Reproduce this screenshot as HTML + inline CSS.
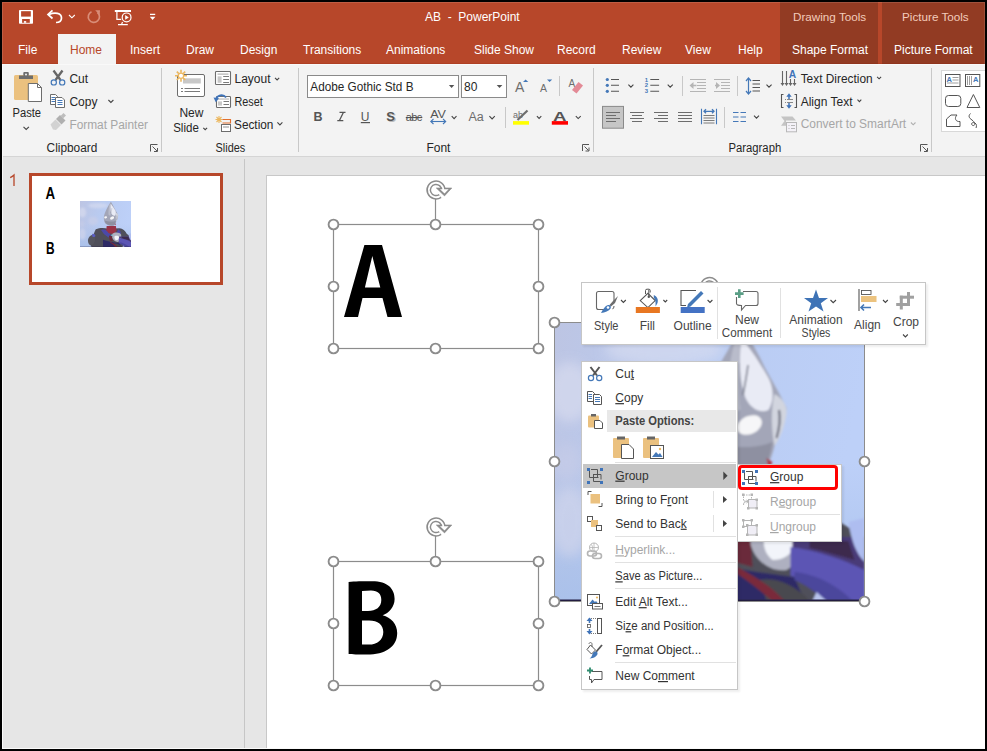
<!DOCTYPE html>
<html><head><meta charset="utf-8">
<style>
*{box-sizing:border-box}
html,body{margin:0;padding:0}
body{width:987px;height:751px;position:relative;overflow:hidden;background:#e6e6e6;font-family:"Liberation Sans",sans-serif;color:#262626}
.a{position:absolute}
.t{position:absolute;white-space:nowrap;line-height:1}
svg{position:absolute;overflow:visible}
</style></head><body>
<!-- title bar -->
<div class="a" style="left:0;top:0;width:987px;height:64px;background:#b7472a"></div>
<div class="a" style="left:780px;top:0;width:98px;height:64px;background:#923b23"></div>
<div class="a" style="left:882px;top:0;width:105px;height:64px;background:#923b23"></div>
<div class="t" style="left:425px;top:11px;font-size:12px;color:#fff">AB&nbsp;&nbsp;-&nbsp;&nbsp;PowerPoint</div>
<div class="t" style="left:793px;top:10.5px;font-size:11.7px;color:#f3cbbb">Drawing Tools</div>
<div class="t" style="left:902px;top:10.5px;font-size:11.7px;color:#f3cbbb">Picture Tools</div>
<!-- tabs -->
<div class="a" style="left:58px;top:34px;width:58px;height:30px;background:#f3f3f3"></div>
<div class="t" style="left:18px;top:44px;font-size:12px;color:#fff">File</div>
<div class="t" style="left:70px;top:44px;font-size:12px;color:#b7472a">Home</div>
<div class="t" style="left:130px;top:44px;font-size:12px;color:#fff">Insert</div>
<div class="t" style="left:186px;top:44px;font-size:12px;color:#fff">Draw</div>
<div class="t" style="left:240px;top:44px;font-size:12px;color:#fff">Design</div>
<div class="t" style="left:303px;top:44px;font-size:12px;color:#fff">Transitions</div>
<div class="t" style="left:386px;top:44px;font-size:12px;color:#fff">Animations</div>
<div class="t" style="left:474px;top:44px;font-size:12px;color:#fff">Slide Show</div>
<div class="t" style="left:557px;top:44px;font-size:12px;color:#fff">Record</div>
<div class="t" style="left:622px;top:44px;font-size:12px;color:#fff">Review</div>
<div class="t" style="left:685px;top:44px;font-size:12px;color:#fff">View</div>
<div class="t" style="left:738px;top:44px;font-size:12px;color:#fff">Help</div>
<div class="t" style="left:792px;top:44px;font-size:12px;color:#fff">Shape Format</div>
<div class="t" style="left:894px;top:44px;font-size:12px;color:#fff">Picture Format</div>
<!-- ribbon -->
<div class="a" style="left:0;top:64px;width:987px;height:92px;background:#f3f3f3"></div>
<div class="a" style="left:0;top:156px;width:987px;height:1px;background:#d5d5d5"></div>


<svg style="left:0;top:0" width="987" height="160" font-family="Liberation Sans" font-size="12">
 <g fill="#262626">
  <text x="12.5" y="117" textLength="28.5" lengthAdjust="spacingAndGlyphs">Paste</text>
  <text x="69.4" y="83">Cut</text>
  <text x="69.4" y="105.7">Copy</text>
  <text x="69.4" y="128.7" fill="#a6a6a6" textLength="78.6" lengthAdjust="spacingAndGlyphs">Format Painter</text>
  <text x="46.6" y="151.5" textLength="50.7" lengthAdjust="spacingAndGlyphs">Clipboard</text>
  <text x="179.4" y="116.6">New</text>
  <text x="173.2" y="132.3" textLength="25.6" lengthAdjust="spacingAndGlyphs">Slide</text>
  <text x="234.5" y="83.1">Layout</text>
  <text x="234.5" y="105.7" textLength="28.3" lengthAdjust="spacingAndGlyphs">Reset</text>
  <text x="234" y="128.6" textLength="39.4" lengthAdjust="spacingAndGlyphs">Section</text>
  <text x="215.6" y="151.5" textLength="29.7" lengthAdjust="spacingAndGlyphs">Slides</text>
  <text x="426.4" y="151.9">Font</text>
  <text x="728.5" y="151.8" textLength="52.7" lengthAdjust="spacingAndGlyphs">Paragraph</text>
  <text x="800.7" y="82.9" textLength="71.9" lengthAdjust="spacingAndGlyphs">Text Direction</text>
  <text x="800.7" y="105.6">Align Text</text>
  <text x="800.7" y="128.4" fill="#a6a6a6" textLength="105.5" lengthAdjust="spacingAndGlyphs">Convert to SmartArt</text>
 </g>
 <!-- separators -->
 <g fill="#c8c8c8">
  <rect x="161" y="68" width="1" height="84"/>
  <rect x="298" y="68" width="1" height="84"/>
  <rect x="593" y="68" width="1" height="84"/>
  <rect x="931" y="68" width="1" height="84"/>
  <rect x="559" y="76" width="1" height="20"/>
  <rect x="505" y="107" width="1" height="21"/>
  <rect x="682" y="76" width="1" height="20"/>
  <rect x="737" y="76" width="1" height="20"/>
  <rect x="724" y="107" width="1" height="21"/>
 </g>
 <!-- chevrons -->
 <g fill="none" stroke="#444" stroke-width="1.1">
  <path d="M23.5,126.8 L26.2,129.5 L28.9,126.8"/>
  <path d="M108.4,100 L110.9,102.5 L113.4,100"/>
  <path d="M203.3,127.8 L205.2,129.7 L207.1,127.8"/>
  <path d="M275,77.8 L277.1,79.9 L279.2,77.8"/>
  <path d="M277.4,122.4 L279.9,124.9 L282.4,122.4"/>
  <path d="M69,15 L71.9,17.8 L74.8,15" stroke="#fff"/>
  <path d="M451.7,116.2 L454.1,118.6 L456.5,116.2"/>
  <path d="M489.4,116.2 L492.1,118.9 L494.8,116.2"/>
  <path d="M536.9,116.2 L539.1,118.4 L541.3,116.2"/>
  <path d="M575.8,116.2 L578.2,118.6 L580.7,116.2"/>
  <path d="M628.4,84.7 L630.9,87.2 L633.4,84.7"/>
  <path d="M667.7,84.7 L670.2,87.2 L672.8,84.7"/>
  <path d="M766.5,84.7 L769,87.2 L771.6,84.7"/>
  <path d="M754,115.7 L756.5,118.2 L759,115.7"/>
  <path d="M877.1,76.8 L879.1,78.8 L881.1,76.8"/>
  <path d="M857.5,99.7 L859.4,101.6 L861.3,99.7"/>
  <path d="M910.9,122.5 L913.2,124.8 L915.5,122.5" stroke="#b0b0b0"/>
 </g>
 <!-- dialog launchers -->
 <g fill="none" stroke="#555" stroke-width="1">
  <path d="M150.5,151.5 L150.5,144.5 L157.5,144.5 M152.5,146.5 L157,151 M157.5,148 L157.5,151.5 L154,151.5"/>
  <path d="M582.5,151 L582.5,144.5 L589,144.5 M584.5,146.5 L588.5,150.5 M589,147.5 L589,151 L585.5,151"/>
  <path d="M920.5,151.5 L920.5,144.5 L927.5,144.5 M922.5,146.5 L927,151 M927.5,148 L927.5,151.5 L924,151.5"/>
 </g>
 <!-- Paste icon -->
 <rect x="14" y="75" width="24" height="25" rx="1.5" fill="#ebc17f"/>
 <rect x="19" y="75.5" width="14" height="3.5" fill="#6d6d6d"/>
 <rect x="23.3" y="72" width="5.5" height="4" rx="1" fill="#6d6d6d"/>
 <circle cx="26" cy="74.5" r="1" fill="#f3f3f3"/>
 <path d="M28.3,83.5 L37.5,83.5 L41.5,87.5 L41.5,101.5 L28.3,101.5 Z" fill="#fff" stroke="#6d6d6d" stroke-width="1"/>
 <path d="M37.5,83.5 L37.5,87.5 L41.5,87.5" fill="none" stroke="#6d6d6d" stroke-width="1"/>
 <!-- Cut icon -->
 <path d="M53.5,70.5 L60.5,80 M62.5,70.5 L55.5,80" stroke="#666" stroke-width="2.3" fill="none"/>
 <circle cx="53.8" cy="82.4" r="2.6" fill="none" stroke="#4478b8" stroke-width="1.2"/>
 <circle cx="62.2" cy="82.4" r="2.6" fill="none" stroke="#4478b8" stroke-width="1.2"/>
 <!-- Copy icon -->
 <path d="M50.5,94.5 L55.5,94.5 L57.5,96.5 L57.5,104.5 L50.5,104.5 Z" fill="#fff" stroke="#6d6d6d"/>
 <path d="M55.5,97.5 L62,97.5 L64.5,100 L64.5,107.5 L55.5,107.5 Z" fill="#fff" stroke="#6d6d6d"/>
 <path d="M51.5,97.5 h3.5 M51.5,99.5 h3.5 M51.5,101.5 h3.5 M57.5,100.5 h5 M57.5,102.5 h5 M57.5,104.5 h5" stroke="#4478b8" stroke-width="1"/>
 <!-- Format painter -->
 <path d="M50.5,124.5 L55.5,119.5 L61,125 L56,130 L53,129.5 Z" fill="#d2d2d2"/>
 <path d="M56,119 L60,115 L65.5,120.5 L61.5,124.5 Z" fill="#b0b0b0"/>
 <path d="M60.5,116 L63.5,113 L66,115.5 L63,118.5 Z" fill="#bdbdbd"/>
 <!-- New slide -->
 <rect x="177.5" y="74.5" width="27" height="22" rx="1.5" fill="#fff" stroke="#6d6d6d"/>
 <rect x="183" y="78.3" width="17.8" height="5.2" fill="#c8c8c8"/>
 <path d="M181,88.5 h2 M184.5,88.5 h15.5 M181,91.5 h2 M184.5,91.5 h15.5" stroke="#7a7a7a" stroke-width="1"/>
 <g stroke="#ecb860" stroke-width="1.6"><path d="M181,69.8 v3 M181,78.8 v3 M175,75.8 h3 M184,75.8 h3 M176.8,71.6 l2,2 M183.2,78 l2,2 M185.2,71.6 l-2,2 M178.8,78 l-2,2"/></g>
 <circle cx="181" cy="75.8" r="2.6" fill="#fff" stroke="#ecb860" stroke-width="1.2"/>
 <!-- Layout -->
 <rect x="215.5" y="71.5" width="15" height="13" rx="0.8" fill="#fff" stroke="#6d6d6d" stroke-width="1.1"/>
 <rect x="217.5" y="73.3" width="11" height="1.7" fill="#c8c8c8"/>
 <rect x="217.6" y="76.3" width="4" height="6.5" fill="#c8c8c8"/>
 <path d="M223.2,76.5 h5.8 M223.2,79.5 h5.8 M223.2,82.5 h5.8" stroke="#7a7a7a" stroke-width="1"/>
 <!-- Reset -->
 <rect x="216.5" y="96.5" width="14" height="11" rx="0.8" fill="#fff" stroke="#6d6d6d" stroke-width="1.1"/>
 <rect x="218" y="98.3" width="11" height="1.5" fill="#c8c8c8"/>
 <rect x="218" y="101.4" width="4" height="4.2" fill="#c8c8c8"/>
 <path d="M223.5,101.5 h5.5 M223.5,104.5 h5.5" stroke="#7a7a7a" stroke-width="1"/>
 <path d="M215.8,100 C217,95 223,93.5 226,97.5" fill="none" stroke="#3f73b8" stroke-width="1.8"/>
 <path d="M213.5,97.5 L215.8,102.3 L219,98.3 Z" fill="#3f73b8"/>
 <!-- Section -->
 <g stroke="#ecb860" stroke-width="1.1"><path d="M219,116 v7 M215.5,119.5 h7 M216.5,117 l5,5 M221.5,117 l-5,5"/></g>
 <path d="M222.5,119.5 h8 v3.5 h-8" fill="none" stroke="#e2702e" stroke-width="1.1"/>
 <rect x="221.5" y="124.5" width="9" height="7" fill="#fff" stroke="#6d6d6d"/>
 <rect x="223" y="126" width="6" height="2" fill="#c8c8c8"/>
 <!-- Font boxes -->
 <rect x="307.5" y="75.5" width="151" height="22" fill="#fff" stroke="#8a8a8a"/>
 <rect x="461.5" y="75.5" width="45" height="22" fill="#fff" stroke="#8a8a8a"/>
 <text x="310.3" y="90.6" fill="#262626" textLength="103.2" lengthAdjust="spacingAndGlyphs">Adobe Gothic Std B</text>
 <text x="464" y="90.6" fill="#262626">80</text>
 <path d="M448.9,85 L454.3,85 L451.6,88 Z M496.7,85 L502.4,85 L499.5,88 Z" fill="#555"/>
 <!-- grow/shrink -->
 <text x="515" y="92" font-size="14" fill="#6d6d6d">A</text>
 <path d="M523,82 L528.3,82 L525.6,79.5 Z" fill="#4478b8"/>
 <text x="540" y="92" font-size="10.5" fill="#6d6d6d">A</text>
 <path d="M547,79.5 L552.2,79.5 L549.6,82 Z" fill="#4478b8"/>
 <!-- clear formatting -->
 <text x="568.5" y="87" font-size="10" fill="#6d6d6d">A</text>
 <path d="M572,90 L578.5,82 L583,85.5 L576.5,93.5 Z" fill="#e38a96"/>
 <!-- B I U S abc AV -->
 <text x="313.5" y="121" font-size="12.5" font-weight="bold" fill="#555">B</text>
 <path d="M339.5,112.3 h6 M337.3,120.7 h6 M343.5,112.3 L339.3,120.7" stroke="#555" stroke-width="1.3" fill="none"/>
 <text x="360.8" y="121" font-size="12" fill="#555">U</text>
 <rect x="360.8" y="122" width="9.2" height="1.2" fill="#555"/>
 <text x="387.5" y="122" font-size="13" font-weight="bold" fill="#bbb">S</text>
 <text x="386.3" y="121" font-size="13" font-weight="bold" fill="#555">S</text>
 <text x="405.8" y="121" font-size="11" fill="#555" textLength="16.5">abc</text>
 <rect x="405.8" y="117" width="16.5" height="1.1" fill="#555"/>
 <text x="430.2" y="117.5" font-size="10.5" fill="#555" textLength="15.8" lengthAdjust="spacingAndGlyphs">AV</text>
 <path d="M431,121.5 h14.5" stroke="#4478b8" stroke-width="1.1"/>
 <path d="M433.5,119 L430.8,121.5 L433.5,124 M443,119 L445.7,121.5 L443,124" fill="none" stroke="#4478b8" stroke-width="1.1"/>
 <text x="468.4" y="121.2" font-size="12.5" fill="#6d6d6d">Aa</text>
 <!-- highlight -->
 <text x="513" y="118" font-size="9" fill="#6d6d6d">ab</text>
 <path d="M517.5,120 L527.5,110.5" stroke="#6d6d6d" stroke-width="2.2"/>
 <rect x="513" y="121.1" width="16" height="3.6" fill="#ffff00"/>
 <!-- font color -->
 <text x="553" y="120.5" font-size="13" font-weight="bold" fill="#555" textLength="13.5" lengthAdjust="spacingAndGlyphs">A</text>
 <rect x="551.8" y="121.1" width="16.2" height="3.6" fill="#ff0000"/>
 <!-- bullets -->
 <g fill="#4478b8"><circle cx="607.3" cy="79.5" r="1.6"/><circle cx="607.3" cy="85.3" r="1.6"/><circle cx="607.3" cy="91.3" r="1.6"/></g>
 <path d="M611,79.5 h8 M611,85.3 h8 M611,91.3 h8" stroke="#555" stroke-width="1.1"/>
 <g font-size="6" fill="#4478b8" font-weight="bold"><text x="644.7" y="81.5">1</text><text x="644.7" y="87.3">2</text><text x="644.7" y="93.3">3</text></g>
 <path d="M650.3,79.5 h8.8 M650.3,85.3 h8.8 M650.3,91.3 h8.8" stroke="#555" stroke-width="1.1"/>
 <!-- indents -->
 <g stroke="#b5b5b5" stroke-width="1"><path d="M690,79.5 h16 M697,82.5 h9 M697,85.5 h9 M697,88.5 h9 M690,91.5 h16"/><path d="M714,79.5 h16 M721,82.5 h9 M721,85.5 h9 M721,88.5 h9 M714,91.5 h16"/>
 <path d="M693,85.5 h3.5 M715,85.5 h3" stroke-width="1.6"/></g>
 <path d="M689.5,85.5 L693.5,82 L693.5,89 Z M720,85.5 L716,82 L716,89 Z" fill="#b5b5b5"/>
 <!-- line spacing -->
 <path d="M748.5,78.5 v15" stroke="#4478b8" stroke-width="1.2"/>
 <path d="M746,81 L748.5,78 L751,81 M746,91 L748.5,94 L751,91" fill="none" stroke="#4478b8" stroke-width="1.2"/>
 <path d="M752.5,80.5 h7.5 M752.5,84 h7.5 M752.5,87.5 h7.5 M752.5,91 h7.5" stroke="#555" stroke-width="1.2"/>
 <!-- align row -->
 <rect x="602.5" y="106.4" width="21" height="21.8" fill="#c6c6c6" stroke="#8a8a8a"/>
 <g stroke="#6d6d6d" stroke-width="1" fill="none">
 <path d="M606,112.5 h14 M606,115.5 h10 M606,118.5 h14 M606,121.5 h10"/>
 <path d="M630,112.5 h14 M632,115.5 h10 M630,118.5 h14 M632,121.5 h10"/>
 <path d="M654,112.5 h14 M658,115.5 h10 M654,118.5 h14 M658,121.5 h10"/>
 <path d="M678,112.5 h14 M678,115.5 h14 M678,118.5 h14 M678,121.5 h14"/>
 <path d="M703.5,115.5 h11 M703.5,118 h11 M703.5,120.5 h11 M703.5,123 h11" stroke-width="0.9"/>
 </g>
 <path d="M701.5,108.7 v15.5 M716.5,108.7 v15.5" stroke="#4478b8" stroke-width="1.1"/>
 <path d="M704,111.3 h10 M706,109.3 L704,111.3 L706,113.3 M712,109.3 L714,111.3 L712,113.3" fill="none" stroke="#4478b8" stroke-width="1.3"/>
 <path d="M733,112.5 h5.5 M740.5,112.5 h5.5 M733,117 h5.5 M740.5,117 h5.5 M733,121.5 h5.5 M740.5,121.5 h5.5" stroke="#4478b8" stroke-width="1.2"/>
 <!-- text direction -->
 <path d="M782.5,71 v13 M786.5,71 v13 M790.5,79 v5 M794.5,79 v5" stroke="#666" stroke-width="1.1"/>
 <path d="M780.5,83 L784.5,83 L782.5,86 Z M784.5,83 L788.5,83 L786.5,86 Z M788.5,83 L792.5,83 L790.5,86 Z M792.5,83 L796.5,83 L794.5,86 Z" fill="#666"/>
 <text x="788.8" y="77.8" font-size="10" font-weight="bold" fill="#3f73b8" textLength="7.4" lengthAdjust="spacingAndGlyphs">A</text>
 <!-- align text -->
 <path d="M783.5,94.5 h-2 v13 h2 M794.5,94.5 h2 v13 h-2" fill="none" stroke="#555" stroke-width="1.1"/>
 <path d="M785,99.5 h1 M787,99.5 h6 M785,102.5 h1 M787,102.5 h6" stroke="#888" stroke-width="1"/>
 <path d="M789,96 v3 M789,103 v3" stroke="#3f73b8" stroke-width="1.5"/>
 <path d="M786.3,96.8 L789,93.3 L791.7,96.8 Z M786.3,105.2 L789,108.7 L791.7,105.2 Z" fill="#3f73b8"/>
 <!-- convert smartart -->
 <path d="M781,116.5 L792.5,116.5 L796,120.5 L786,120.5 L786,125.8 L781,125.8 L784.5,121 Z" fill="#c4c4c4"/>
 <rect x="786.5" y="122.5" width="10" height="9.3" fill="#f4f2f8" stroke="#b8b8b8"/>
 <path d="M788.5,125.5 h1 M791,125.5 h4 M788.5,128.5 h1 M791,128.5 h4" stroke="#b8b8b8" stroke-width="1"/>
 <!-- shapes gallery -->
 <rect x="941.5" y="70.5" width="50" height="61" fill="#fff" stroke="#d8d8d8"/>
 <rect x="945.5" y="74.5" width="14.5" height="12" fill="#fff" stroke="#555"/>
 <text x="946.5" y="81.5" font-size="7.5" font-weight="bold" fill="#4478b8">A</text>
 <path d="M952.5,77.5 h6 M952.5,80 h6 M947,83 h11.5" stroke="#888" stroke-width="0.8"/>
 <rect x="965.5" y="74.5" width="14.3" height="12" fill="#fff" stroke="#555"/>
 <path d="M967.5,76 v9 M969.5,76 v9 M971.5,76 v9" stroke="#888" stroke-width="0.8"/>
 <text x="973" y="81.5" font-size="7.5" font-weight="bold" fill="#4478b8">A</text>
 <rect x="945.5" y="95.5" width="15.3" height="11" rx="3" fill="none" stroke="#555"/>
 <path d="M973.4,94.5 L979.8,107.5 L967,107.5 Z" fill="none" stroke="#555"/>
 <path d="M946.5,126.5 L946.5,119 L951,115 L957,115 C954,118 955.5,122 960,121.5 L960,126.5 Z" fill="none" stroke="#555" stroke-linejoin="round"/>
 <path d="M970.5,113.5 C968,116 969,118 972,120 C976,123 975,126 973,125.5 C970,124.5 972,121.5 975,123 C977,124 976.5,127 976,128" fill="none" stroke="#555" stroke-width="1"/>
 <!-- QAT icons -->
 <rect x="19" y="10" width="14" height="13.7" rx="0.8" fill="#fff"/>
 <rect x="21.1" y="11.2" width="9.7" height="5.4" fill="#b7472a"/>
 <rect x="22.1" y="19" width="7.7" height="3.8" fill="#b7472a"/>
 <rect x="23.9" y="21.1" width="2.3" height="1.7" fill="#fff"/>
 <path d="M49,14.5 C55,12 61.5,13 61.5,18 C61.5,21 59,22.5 56,22.5" fill="none" stroke="#fff" stroke-width="1.7"/>
 <path d="M52.5,10.3 L48,14.5 L52.5,18.5" fill="none" stroke="#fff" stroke-width="1.7"/>
 <path d="M97.5,12.5 A5.6,5.6 0 1 1 91.5,11.7" fill="none" stroke="#d98d78" stroke-width="1.7"/>
 <path d="M95.2,10.3 L100,10.3 L99.6,15 Z" fill="#d98d78"/>
 <path d="M114.8,11 h16.2" stroke="#fff" stroke-width="2"/>
 <path d="M116.9,12 v7.4 h4.3" fill="none" stroke="#fff" stroke-width="1.2"/>
 <circle cx="126.6" cy="17.4" r="4.4" fill="none" stroke="#fff" stroke-width="1.2"/>
 <path d="M125.2,15 L128.8,17.4 L125.2,19.8 Z" fill="#fff"/>
 <path d="M118,24.6 h9.8 M122.5,22 L121.5,24.6" stroke="#fff" stroke-width="1.2"/>
 <path d="M150,14.4 h5.2" stroke="#fff" stroke-width="1.3"/>
 <path d="M149.8,16.8 L155.4,16.8 L152.6,19.9 Z" fill="#fff"/>
</svg>

<!-- thumbnail panel -->
<div class="a" style="left:244px;top:159px;width:1px;height:600px;background:#c6c6c6"></div>
<svg style="left:0;top:170px" width="30" height="20"><path d="M10.2,7.6 C11.8,6.8 13,6 14,5 L14,16" fill="none" stroke="#b7472a" stroke-width="1.3"/></svg>
<div class="a" style="left:29px;top:173px;width:194px;height:112px;border:3px solid #b7472a;background:#fff"></div>

<!-- slide -->
<div class="a" style="left:266px;top:175px;width:730px;height:600px;background:#fff;border:1px solid #c8c8c8"></div>


<!-- slide content -->
<svg style="left:0;top:0" width="987" height="751">
 <defs>
  <g id="hd"><circle r="4.9" fill="#fff" stroke="#8c8c8c" stroke-width="1.9"/></g>
  <g id="rot"><path d="M7.25,0 A7.25,7.25 0 1 0 4.16,5.94" fill="none" stroke="#8c8c8c" stroke-width="4.8"/>
   <path d="M0.3,-2 L15.8,-2 L8.5,5.9 Z" fill="#8c8c8c" stroke="#8c8c8c" stroke-width="0.6" stroke-linejoin="round"/>
   <path d="M7.25,0.5 A7.25,7.25 0 1 0 4.16,5.94" fill="none" stroke="#fff" stroke-width="1.9"/>
   <path d="M4,-0.8 L12.6,-0.8 L8.5,3.6 Z" fill="#fff"/></g>
 </defs>
 <!-- box A -->
 <line x1="435.5" y1="199" x2="435.5" y2="224" stroke="#8c8c8c" stroke-width="1.2"/>
 <rect x="333.5" y="224.5" width="205" height="124" fill="none" stroke="#8c8c8c" stroke-width="1.2"/>
 <use href="#rot" x="436" y="190"/>
 <use href="#hd" x="333.5" y="224.5"/><use href="#hd" x="435.5" y="224.5"/><use href="#hd" x="538.5" y="224.5"/>
 <use href="#hd" x="333.5" y="286.5"/><use href="#hd" x="538.5" y="286.5"/>
 <use href="#hd" x="333.5" y="348.5"/><use href="#hd" x="435.5" y="348.5"/><use href="#hd" x="538.5" y="348.5"/>
 <path fill-rule="evenodd" fill="#000" d="M344,317 L364.4,245 L382,245 L402,317 L387.5,317 L382.5,298 L362.5,298 L358,317 Z M372.3,256 L380.3,287.5 L364.9,287.5 Z"/>
 <!-- box B -->
 <line x1="435.5" y1="536" x2="435.5" y2="561" stroke="#8c8c8c" stroke-width="1.2"/>
 <rect x="333.5" y="561.5" width="205" height="124" fill="none" stroke="#8c8c8c" stroke-width="1.2"/>
 <use href="#rot" x="436" y="527"/>
 <use href="#hd" x="333.5" y="561.5"/><use href="#hd" x="435.5" y="561.5"/><use href="#hd" x="538.5" y="561.5"/>
 <use href="#hd" x="333.5" y="623.5"/><use href="#hd" x="538.5" y="623.5"/>
 <use href="#hd" x="333.5" y="685.5"/><use href="#hd" x="435.5" y="685.5"/><use href="#hd" x="538.5" y="685.5"/>
 <path fill-rule="evenodd" fill="#000" d="M348.6,582 C355,581.3 362,581.3 372,581.3 C388,581.3 394.6,589 394.6,599 C394.6,607 389,613 382.6,615.3 C391,617.5 397.2,624 397.2,633 C397.2,647 385,654.6 367,654.6 C358,654.6 352,654.3 348.6,654 Z M362,591 L371,590.6 C378,590.6 381.3,594 381.3,600 C381.3,607 376,611 368,611 L362,611 Z M362,620.6 L369,620.6 C378,620.6 383.3,625 383.3,632 C383.3,640 377,644.6 369,644.6 C366,644.6 364,644.6 362,644.4 Z"/>
</svg>
<!-- picture -->
<svg style="left:0;top:0;width:0;height:0">
 <defs>
  <linearGradient id="sky2" x1="0" y1="0" x2="0" y2="1"><stop offset="0.5" stop-color="#a8c0ea" stop-opacity="0"/><stop offset="1" stop-color="#a6bfea" stop-opacity="0.8"/></linearGradient>
  <linearGradient id="sky" x1="0" y1="0" x2="1" y2="0.2"><stop offset="0" stop-color="#bdc5e3"/><stop offset="0.45" stop-color="#b9cbf1"/><stop offset="1" stop-color="#bdd0f8"/></linearGradient>
  <filter id="bl" x="-30%" y="-30%" width="160%" height="160%"><feGaussianBlur stdDeviation="6"/></filter>
  <filter id="bl2" x="-5%" y="-5%" width="110%" height="110%"><feGaussianBlur stdDeviation="1.3"/></filter>
  <g id="ultra">
   <rect x="0" y="0" width="310" height="279" fill="url(#sky)"/><rect x="0" y="0" width="310" height="279" fill="url(#sky2)"/>
   <g filter="url(#bl)" opacity="0.7"><ellipse cx="15" cy="70" rx="22" ry="30" fill="#d8dcef"/><ellipse cx="15" cy="200" rx="20" ry="35" fill="#d0d5ec"/><ellipse cx="12" cy="140" rx="14" ry="18" fill="#c6cce8"/><ellipse cx="110" cy="28" rx="60" ry="16" fill="#d6dbf0"/><ellipse cx="80" cy="120" rx="30" ry="25" fill="#c9cfe9"/></g>
   <g filter="url(#bl2)">
    <!-- body -->
    <path d="M96,172 C120,160 150,162 170,168 L240,166 C260,168 275,180 285,200 L310,215 L310,279 L70,279 C60,262 58,245 70,230 C80,215 88,185 96,172 Z" fill="#4f4f5a"/>
    <path d="M48,236 C52,220 62,208 75,205 C85,204 92,212 93,225 C94,245 85,262 70,268 C58,270 48,258 48,236 Z" fill="#55555e"/>
    <path d="M74,200 C82,196 92,200 94,212 C90,220 80,222 74,214 Z" fill="#5a5cc0"/>
    <path d="M128,176 C150,170 165,175 175,188 C185,200 190,215 195,228 C180,226 160,212 145,200 Z" fill="#4c4aa8"/>
    <path d="M162,151 L218,151 L222,180 L205,200 L175,195 L160,178 Z" fill="#9a3246"/>
    <path d="M140,235 C165,245 200,250 240,255 L250,279 L140,279 Z" fill="#2e2c66"/>
    <path d="M176,210 L196,215 L198,245 L180,240 Z" fill="#6a2a3a"/>
    <path d="M205,258 C220,255 240,262 255,279 L212,279 Z" fill="#4a4850"/>
    <path d="M183,245 C200,255 215,262 230,279 L218,279 C205,268 195,260 183,252 Z" fill="#7a2a3a"/>
    <path d="M232,172 C245,178 250,190 248,205 L225,212 C222,200 225,185 232,172 Z" fill="#4c4aa8"/>
    <path d="M196,200 C215,185 242,190 250,205 C254,222 246,240 232,248 C215,250 200,238 196,222 Z" fill="#aeb0c0"/>
    <path d="M210,214 C222,208 238,212 240,222 C238,232 230,238 218,238 C210,232 208,222 210,214 Z" fill="#f2f4fa"/>
    <path d="M238,215 L298,215 L310,232 L310,250 C290,240 262,228 238,226 Z" fill="#4a3b78"/><path d="M255,219 L294,219 L300,238 C285,234 270,229 255,226 Z" fill="#3d2a4e"/>
    <path d="M236,225 C262,228 290,238 310,248 L310,279 L298,279 C278,268 256,258 236,254 Z" fill="#5b55b4"/>
    <path d="M240,250 C262,252 285,265 298,279 L270,279 C262,270 250,262 240,258 Z" fill="#4c469c"/>
    <path d="M294,200 L310,196 L310,240 C302,232 297,220 294,200 Z" fill="#aebdf0"/>
    <path d="M262,270 L272,279 L258,279 Z" fill="#b9c4ee"/>
    <circle cx="194" cy="208" r="4.5" fill="#7fd8f0"/>
    <!-- head -->
    <path d="M188,5 C196,18 204,32 210,45 C216,56 222,66 226,74 L232,86 C231,100 226,115 220,124 C218,132 216,138 212,146 C200,152 185,152 175,148 C162,144 152,136 148,126 C144,112 144,100 146,90 C151,70 162,48 170,34 C176,24 182,12 188,5 Z" fill="#a3a6b8"/>
    <path d="M180,20 C175,40 172,60 173,80 C176,88 182,90 186,88 C184,65 184,40 186,16 Z" fill="#b9bccb"/>
    <path d="M187,16 C197,28 206,42 214,56 C219,66 220,78 214,88 C205,92 196,86 191,76 C185,60 184,40 187,16 Z" fill="#e9ebf5"/>
    <path d="M193.5,43 C192,55 190,65 188.5,73" stroke="#777a8a" stroke-width="1.6" fill="none"/>
    <path d="M150,118 C170,126 200,128 218,120 C216,132 214,140 210,146 C196,152 172,150 155,134 Z" fill="#8e90a1"/>
    <ellipse cx="156" cy="99" rx="9" ry="6.5" fill="#f6f6f8" transform="rotate(-10 156 99)"/>
    <ellipse cx="195" cy="103" rx="13" ry="9" fill="#f6f6f8" transform="rotate(-25 195 103)"/>
    <path d="M220,72 C228,76 233,84 232,92 C230,104 226,116 220,124 C217,110 216,88 220,72 Z" fill="#d2d5df"/>
    <path d="M224.5,88 C226,96 225,106 222,116" stroke="#6c6e7e" stroke-width="2.2" fill="none"/>
    <path d="M212,136 L218,140 L214,148 Z" fill="#a83a4a"/>
   </g>
   <rect x="0" y="277.5" width="310" height="1.6" fill="#221c40"/>
  </g>
 </defs>
</svg>
<svg style="left:554px;top:322px;overflow:hidden" width="311" height="280" viewBox="0 0 311 280">
 <use href="#ultra" x="0.5" y="0"/>
 <rect x="0.5" y="0.5" width="310" height="279" fill="none" stroke="#8c8c8c" stroke-width="1"/>
</svg>
<svg style="left:80px;top:201px;overflow:hidden" width="51" height="46" viewBox="0 0 310 279" preserveAspectRatio="none">
 <use href="#ultra"/>
</svg>
<svg style="left:0;top:0" width="987" height="751">
 <use href="#hd" x="554.5" y="322.5"/><use href="#hd" x="864.5" y="461.5"/><use href="#hd" x="554.5" y="461.5"/>
 <use href="#hd" x="554.5" y="601.5"/><use href="#hd" x="864.5" y="601.5"/><use href="#hd" x="864.5" y="322.5"/>
 <use href="#rot" x="709.5" y="286.5"/>
</svg>

<!-- mini toolbar -->
<div class="a" style="left:581px;top:282px;width:345px;height:63px;background:#fff;border:1px solid #c6c6c6;box-shadow:2px 2px 2px rgba(0,0,0,0.07)"></div>
<div class="a" style="left:717px;top:287px;width:1px;height:52px;background:#e1e1e1"></div>
<div class="a" style="left:780px;top:288px;width:1px;height:50px;background:#e1e1e1"></div>

<!-- context menu -->
<div class="a" style="left:581px;top:361px;width:157px;height:329px;background:#fff;border:1px solid #c6c6c6;box-shadow:2px 2px 2px rgba(0,0,0,0.07)"></div>
<div class="a" style="left:607px;top:410px;width:129px;height:22px;background:#e8e8e8"></div>
<div class="a" style="left:583px;top:464px;width:153px;height:24px;background:#c6c6c6"></div>

<!-- submenu -->
<div class="a" style="left:737px;top:464px;width:105px;height:78px;background:#fff;border:1px solid #c6c6c6;box-shadow:2px 2px 2px rgba(0,0,0,0.07)"></div>
<div class="a" style="left:738px;top:465px;width:100px;height:25px;border:3px solid #f00;border-radius:4px"></div>


<svg style="left:0;top:0" width="987" height="751" font-family="Liberation Sans" font-size="12">
 <!-- mini toolbar labels -->
 <g fill="#454545">
  <text x="594" y="329.7" textLength="24.5" lengthAdjust="spacingAndGlyphs">Style</text>
  <text x="639.7" y="329.7">Fill</text>
  <text x="673.6" y="329.7">Outline</text>
  <text x="735" y="324.2">New</text>
  <text x="721.8" y="337.3" textLength="50.5" lengthAdjust="spacingAndGlyphs">Comment</text>
  <text x="789.3" y="324.2">Animation</text>
  <text x="801.6" y="337.3" textLength="28.8" lengthAdjust="spacingAndGlyphs">Styles</text>
  <text x="854.1" y="329.2">Align</text>
  <text x="893" y="325.5">Crop</text>
 </g>
 <g fill="none" stroke="#444" stroke-width="1.1">
  <path d="M621,300 L623.4,302.4 L625.8,300"/>
  <path d="M663.4,300 L665.3,301.9 L667.2,300"/>
  <path d="M707.6,300 L710,302.4 L712.4,300"/>
  <path d="M830.5,300 L833.2,302.7 L836,300"/>
  <path d="M883,300 L885.4,302.4 L887.8,300"/>
  <path d="M903,334.5 L905.4,336.9 L907.8,334.5"/>
 </g>
 <!-- style icon -->
 <path d="M614,301 L614,293.5 Q614,291.5 612,291.5 L598.5,291.5 Q596.5,291.5 596.5,293.5 L596.5,307.5 Q596.5,309.5 598.5,309.5 L604,309.5" fill="none" stroke="#666" stroke-width="1.1"/>
 <path d="M612.5,309 Q614,308.5 614,306" fill="none" stroke="#666" stroke-width="1.1"/>
 <path d="M618,296 L615,303 L611,306.5 L609.5,305 L613,301 Z" fill="#6d6d6d"/>
 <path d="M601,313 C603,309 605,306 608,305 C610.5,304.5 611.5,306.5 610.5,308.5 C609,311 605,312.5 601,313 Z" fill="#4478b8"/>
 <circle cx="608" cy="307.5" r="1.3" fill="#fff"/>
 <!-- fill icon -->
 <path d="M640.2,300.6 L647.9,293.3 L655.2,300.6 L647.9,307.6 Z" fill="#fff" stroke="#555" stroke-width="1.1"/>
 <path d="M645.5,294 L645.5,290.5 Q645.5,289.2 647,289.2 L648.8,289.2 Q650.2,289.2 650.2,290.5 L650.2,292.5" fill="none" stroke="#555" stroke-width="1"/>
 <path d="M648.8,289.5 L648.8,296" stroke="#555" stroke-width="1"/>
 <circle cx="648.8" cy="296.8" r="1.2" fill="#555"/>
 <path d="M653.8,295 C657.5,296.5 658.5,300 657.5,303 L655.6,306.5 C655.5,303.5 656,300 653.8,298 Z" fill="#4478b8"/>
 <rect x="635.8" y="307" width="24.1" height="6" fill="#e87722"/>
 <!-- outline icon -->
 <path d="M696,290.5 L681,290.5 L681,305.5 L686,305.5" fill="none" stroke="#555" stroke-width="1.1"/>
 <path d="M688,304 L701,291 L703.5,293.5 L690.5,306.5 L687,307.5 Z" fill="#4478b8"/>
 <rect x="680.7" y="307" width="24" height="6" fill="#4472c4"/>
 <!-- new comment icon -->
 <path d="M743,291.5 L756,291.5 Q758,291.5 758,293.5 L758,303.5 Q758,305.5 756,305.5 L745.5,305.5 L741.5,310 L741.5,305.5 Q736.5,305.5 736.5,303.5 L736.5,297" fill="none" stroke="#666" stroke-width="1.1"/>
 <path d="M739.3,289.3 v8.6 M735,293.6 h8.6" stroke="#5a9e86" stroke-width="2.6"/>
 <!-- star -->
 <path d="M816,289.5 L819,298 L828,298 L820.8,303.2 L823.5,311.5 L816,306.5 L808.5,311.5 L811.2,303.2 L804,298 L813,298 Z" fill="#3e73b6"/>
 <!-- align -->
 <path d="M859,289 v22" stroke="#555" stroke-width="1.1"/>
 <rect x="861.5" y="290.5" width="9.5" height="4" fill="#fff" stroke="#555" stroke-width="0.9"/>
 <rect x="861" y="296" width="15.5" height="6" fill="#ecc37f"/>
 <path d="M861,307.5 h10 M864,304.5 L861,307.5 L864,310.5" fill="none" stroke="#4478b8" stroke-width="1.6"/>
 <!-- crop -->
 <g fill="#a0a0a0"><rect x="899.8" y="295.7" width="3" height="13.8"/><rect x="899.8" y="295.7" width="14.2" height="3"/><rect x="907" y="292" width="3" height="14"/><rect x="896.2" y="303" width="13.8" height="3"/></g>
 <!-- context menu items -->
 <g fill="#333">
  <text x="615.3" y="377.6">Cu<tspan text-decoration="underline">t</tspan></text>
  <text x="615.3" y="402.1"><tspan text-decoration="underline">C</tspan>opy</text>
  <text x="615.3" y="424.7" font-weight="bold" fill="#444" textLength="79" lengthAdjust="spacingAndGlyphs">Paste Options:</text>
  <text x="615.3" y="479.6"><tspan text-decoration="underline">G</tspan>roup</text>
  <text x="615.3" y="504">Bring to F<tspan text-decoration="underline">r</tspan>ont</text>
  <text x="615.3" y="527.7">Send to Bac<tspan text-decoration="underline">k</tspan></text>
  <text x="615.3" y="554.3" fill="#a6a6a6"><tspan text-decoration="underline">H</tspan>yperlink...</text>
  <text x="615.3" y="580.3" textLength="87" lengthAdjust="spacingAndGlyphs"><tspan text-decoration="underline">S</tspan>ave as Picture...</text>
  <text x="615.3" y="606.1">Edit <tspan text-decoration="underline">A</tspan>lt Text...</text>
  <text x="615.3" y="630.2" textLength="98.5" lengthAdjust="spacingAndGlyphs">Si<tspan text-decoration="underline">z</tspan>e and Position...</text>
  <text x="615.3" y="654.2">F<tspan text-decoration="underline">o</tspan>rmat Object...</text>
  <text x="615.3" y="680">New Co<tspan text-decoration="underline">m</tspan>ment</text>
  <text x="770" y="481.1"><tspan text-decoration="underline">G</tspan>roup</text>
  <text x="770" y="505.5" fill="#a6a6a6">R<tspan text-decoration="underline">e</tspan>group</text>
  <text x="770" y="531" fill="#a6a6a6"><tspan text-decoration="underline">U</tspan>ngroup</text>
 </g>
 <g fill="#e1e1e1">
  <rect x="615" y="462" width="121" height="1"/>
  <rect x="615" y="536" width="121" height="1"/>
  <rect x="615" y="562" width="121" height="1"/>
  <rect x="615" y="588" width="121" height="1"/>
  <rect x="615" y="662" width="121" height="1"/>
  <rect x="770" y="514" width="70" height="1"/>
  <rect x="713" y="491" width="1" height="17"/>
  <rect x="713" y="515" width="1" height="17"/>
 </g>
 <g fill="#444">
  <path d="M723.3,471.5 L727.6,475.8 L723.3,480.1 Z"/>
  <path d="M723,496.1 L727,499.5 L723,502.9 Z"/>
  <path d="M723,520 L727,523.5 L723,527 Z"/>
 </g>
 <!-- menu icons -->
 <path d="M590.5,367 L597,375.5 M599.5,367 L593,375.5" stroke="#555" stroke-width="2"/>
 <circle cx="591" cy="378" r="2.6" fill="none" stroke="#4478b8" stroke-width="1.2"/>
 <circle cx="599.2" cy="378" r="2.6" fill="none" stroke="#4478b8" stroke-width="1.2"/>
 <path d="M587.5,391.5 L592.5,391.5 L594.5,393.5 L594.5,401.5 L587.5,401.5 Z" fill="#fff" stroke="#555"/>
 <path d="M593.5,394.5 L599.5,394.5 L601.5,396.5 L601.5,404.5 L593.5,404.5 Z" fill="#fff" stroke="#555"/>
 <path d="M588.5,394.5 h3.5 M588.5,396.5 h3.5 M588.5,398.5 h3.5 M595,397.5 h5 M595,399.5 h5 M595,401.5 h5" stroke="#4478b8" stroke-width="1"/>
 <rect x="588" y="415.5" width="11" height="12" rx="1" fill="#ebc17f"/>
 <rect x="591" y="414" width="5" height="2.5" fill="#666"/>
 <path d="M594.5,420.5 L600,420.5 L602.5,423 L602.5,428.5 L594.5,428.5 Z" fill="#fff" stroke="#555"/>
 <!-- paste option icons -->
 <rect x="613" y="438" width="16" height="20" rx="1" fill="#ebc17f"/>
 <rect x="617" y="436.5" width="8" height="3" fill="#666"/>
 <path d="M621.5,444.5 L629,444.5 L633.5,449 L633.5,458.5 L621.5,458.5 Z" fill="#fff" stroke="#555"/>
 <rect x="643" y="438" width="16" height="20" rx="1" fill="#ebc17f"/>
 <rect x="647" y="436.5" width="8" height="3" fill="#666"/>
 <rect x="645.5" y="440.5" width="11" height="16" fill="#f3f3f3" opacity="0"/>
 <rect x="650.5" y="445.5" width="13" height="13" fill="#fff" stroke="#555"/>
 <path d="M652,457 L656,452 L658.5,454.5 L660,453 L662.5,457 Z" fill="#4478b8"/>
 <circle cx="660" cy="449" r="1.2" fill="#ecb860"/>
 <!-- group icon -->
 <g fill="none" stroke="#555" stroke-width="1"><path d="M591,469.5 h6.5 v8.5 M589.5,471 v6.5 h9"/><path d="M593.5,474 v7.5 h6.5 M593.5,474.5 h7.5 v5"/></g>
 <g fill="#3f73b8"><rect x="587" y="468" width="3" height="3"/><rect x="600" y="468" width="3" height="3"/><rect x="587" y="481" width="3" height="3"/><rect x="600" y="481" width="3" height="3"/></g>
 <!-- bring front -->
 <path d="M588,495 v-3.5 h3.5 M602,503 v3.5 h-3.5" fill="none" stroke="#555" stroke-width="1"/>
 <rect x="590.5" y="494" width="9.5" height="9.5" fill="#ebc17f"/>
 <!-- send back -->
 <rect x="587.5" y="516.5" width="5" height="5" fill="#fff" stroke="#555"/>
 <rect x="591" y="520" width="7" height="7" fill="#ebc17f"/>
 <rect x="596.5" y="525.5" width="5" height="5" fill="#fff" stroke="#555"/>
 <!-- hyperlink -->
 <circle cx="594" cy="547.5" r="4.5" fill="none" stroke="#b5b5b5" stroke-width="1"/>
 <path d="M589.5,547.5 h9 M594,543 v9 M591.5,544.5 C593,547 593,549 591.5,551" fill="none" stroke="#b5b5b5" stroke-width="0.8"/>
 <rect x="587.5" y="551" width="9" height="5" rx="2.5" fill="none" stroke="#b5b5b5" stroke-width="1.6"/>
 <rect x="592.5" y="553.5" width="9" height="5" rx="2.5" fill="none" stroke="#b5b5b5" stroke-width="1.6"/>
 <!-- edit alt text -->
 <rect x="587.5" y="594.5" width="12" height="11" fill="#fff" stroke="#555"/>
 <path d="M589,604 L592.5,599.5 L595,602 L596,601 L598.5,604 Z" fill="#4478b8"/>
 <circle cx="597" cy="597.5" r="1.1" fill="#ecb860"/>
 <rect x="592.5" y="603.5" width="10" height="5.5" fill="#fff" stroke="#555"/>
 <path d="M594.5,606.5 h6" stroke="#555" stroke-width="0.8"/>
 <!-- size and position -->
 <rect x="597.5" y="618.5" width="4" height="15" fill="#fff" stroke="#555"/>
 <path d="M589.5,618.5 v4.5 M589.5,629 v4.5" fill="none" stroke="#3f73b8" stroke-width="1.6"/><path d="M586.5,621 L589.5,617.5 L592.5,621 Z M586.5,631 L589.5,634.5 L592.5,631 Z" fill="#3f73b8"/>
 <rect x="587.5" y="624.5" width="3" height="3" fill="none" stroke="#555" stroke-width="0.8"/>
 <path d="M591,618.5 h5 M591,633.5 h5" stroke="#555" stroke-width="0.8" stroke-dasharray="1,1"/>
 <!-- format object -->
 <path d="M590.5,645 L595.5,650 L591.5,654 L587,649.5 Z" fill="#fff" stroke="#555"/>
 <path d="M589,644 C589,642 592,642 592,644 v3" fill="none" stroke="#555" stroke-width="0.8"/>
 <path d="M596,652 L602,645" stroke="#555" stroke-width="1.8"/>
 <path d="M592.5,654 C594,651 597,651 597.5,653 C598,655.5 594,658.5 589.5,658.5 C591,657.5 592,656 592.5,654 Z" fill="#4478b8"/>
 <!-- new comment -->
 <path d="M591.5,671.5 L602,671.5 L602,679.5 L594,679.5 L591.5,683 L591.5,679.5 L589.5,679.5 L589.5,676" fill="none" stroke="#555" stroke-width="1"/>
 <path d="M590,667.5 v6 M587,670.5 h6" stroke="#2e8b6e" stroke-width="1.8"/>
 <!-- submenu icons -->
 <g fill="none" stroke="#555" stroke-width="1"><path d="M746,471.5 h6.5 v8.5 M744.5,473 v6.5 h9"/><path d="M748.5,476 v7.5 h6.5 M748.5,476.5 h7.5 v5"/></g>
 <g fill="#3f73b8"><rect x="742" y="470" width="3" height="3"/><rect x="755" y="470" width="3" height="3"/><rect x="742" y="482" width="3" height="3"/><rect x="755" y="482" width="3" height="3"/></g>
 <g fill="none" stroke="#b5b5b5" stroke-width="1">
  <rect x="743.5" y="495" width="8" height="6" stroke-dasharray="1.5,1"/>
  <rect x="748.5" y="499.5" width="8.5" height="8.5" fill="#f0eef6"/>
  <path d="M743.5,505 C743.5,502 745,501.5 748,501.5 M746.5,500 L748.5,501.5 L746.5,503"/>
  <rect x="743.5" y="520.5" width="8" height="6"/>
  <rect x="747.5" y="525.5" width="9.5" height="9.5" fill="#f0eef6"/>
 </g>
 <g fill="#b5b5b5"><rect x="742" y="519" width="2.5" height="2.5"/><rect x="750.5" y="519" width="2.5" height="2.5"/><rect x="742" y="525.5" width="2.5" height="2.5"/><rect x="746" y="524" width="2.5" height="2.5"/><rect x="755.5" y="524" width="2.5" height="2.5"/><rect x="746" y="533.5" width="2.5" height="2.5"/><rect x="755.5" y="533.5" width="2.5" height="2.5"/>
 <rect x="742" y="493.5" width="2.5" height="2.5"/><rect x="750.5" y="493.5" width="2.5" height="2.5"/><rect x="755.5" y="498.5" width="2.5" height="2.5"/><rect x="747" y="507" width="2.5" height="2.5"/><rect x="755.5" y="507" width="2.5" height="2.5"/></g>
</svg>
<!-- thumbnail content -->
<svg style="left:30px;top:174px" width="192" height="110">
 <text x="15.6" y="25" font-family="Liberation Sans" font-size="16.5" font-weight="bold" fill="#000" textLength="9.6" lengthAdjust="spacingAndGlyphs">A</text>
 <text x="16" y="80" font-family="Liberation Sans" font-size="16.5" font-weight="bold" fill="#000" textLength="8.6" lengthAdjust="spacingAndGlyphs">B</text>
</svg>

<!-- edge highlights -->
<div class="a" style="left:2px;top:2px;width:983px;height:1px;background:rgba(255,255,255,0.12)"></div>
<div class="a" style="left:2px;top:3px;width:1px;height:61px;background:rgba(255,255,255,0.12)"></div>
<div class="a" style="left:984px;top:3px;width:1px;height:61px;background:rgba(255,255,255,0.1)"></div>
<div class="a" style="left:2px;top:64px;width:1px;height:685px;background:#fafafa"></div>
<div class="a" style="left:2px;top:748px;width:983px;height:1px;background:#fafafa"></div>
<div class="a" style="left:0;top:63px;width:58px;height:1px;background:rgba(120,20,0,0.12)"></div><div class="a" style="left:116px;top:63px;width:871px;height:1px;background:rgba(120,20,0,0.12)"></div>
<div class="a" style="left:0;top:64px;width:987px;height:1px;background:rgba(255,255,255,0.5)"></div>
<!-- border -->
<div class="a" style="left:0;top:0;width:987px;height:2px;background:#000"></div>
<div class="a" style="left:0;top:749px;width:987px;height:2px;background:#000"></div>
<div class="a" style="left:0;top:0;width:2px;height:751px;background:#000"></div>
<div class="a" style="left:985px;top:0;width:2px;height:751px;background:#000"></div>
</body></html>
